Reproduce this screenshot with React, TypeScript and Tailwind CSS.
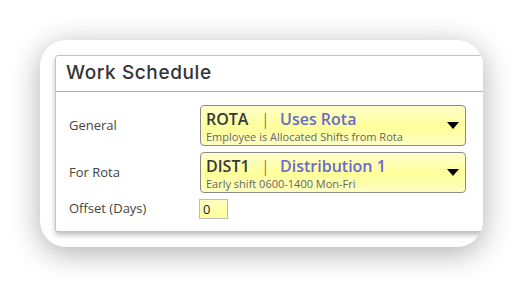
import React from 'react';

const Caret = () => (
    <svg width="12" height="7" viewBox="0 0 12 7" className="shrink-0">
        <path d="M0 0 H12 L6 7 Z" fill="#000" />
    </svg>
);

const RotaSelect = ({ code, name, note }: { code: string; name: string; note: string }) => (
    <div className="w-[266px] h-[41px] rounded-[4px] border border-[#8a8a8a] bg-[linear-gradient(to_bottom,#ffffcc,#ffff99_55%,#ffffc4)] flex items-center pl-[5px] pr-[6px]">
        <div className="flex-1 min-w-0 leading-none">
            <div className="flex items-center text-[16px] font-semibold h-[20px]">
                <span className="text-[#383838] w-[55px]">{code}</span>
                <span className="text-[#b07840] font-normal w-[19px]">|</span>
                <span className="text-[#6a6acc]">{name}</span>
            </div>
            <div className="text-[11px] text-[#666] mt-[2px] whitespace-nowrap">{note}</div>
        </div>
        <Caret />
    </div>
);

export default function App() {
    const rows = [
        { label: 'General', code: 'ROTA', name: 'Uses Rota', note: 'Employee is Allocated Shifts from Rota' },
        { label: 'For Rota', code: 'DIST1', name: 'Distribution 1', note: 'Early shift 0600-1400 Mon-Fri' },
    ];

    return (
        <div className="w-[523px] h-[288px] bg-white pt-[40px] pl-[40px] font-['Open_Sans',sans-serif]">
            <div className="w-[443px] h-[207px] rounded-[26px] bg-white overflow-hidden shadow-[0_6px_30px_rgba(0,0,0,0.32)] pt-[15px] pl-[15px]">
                <div className="w-[460px] border border-[#c4c4c4] rounded-[3px] bg-white shadow-[0_3px_5px_rgba(0,0,0,0.25)]">
                    <div className="h-[36px] border-b border-[#b4b4b4] flex items-center pl-[10px]">
                        <h3 className="text-[19px] font-medium text-[#333] font-['Inter',sans-serif] tracking-[0.6px]">Work Schedule</h3>
                    </div>
                    <div className="pt-[13px] pb-[12px] pl-[13px] flex flex-col gap-[6px]">
                        {rows.map(row => (
                            <div key={row.code} className="flex items-center">
                                <div className="w-[131px] text-[13px] text-[#444]">{row.label}</div>
                                <RotaSelect code={row.code} name={row.name} note={row.note} />
                            </div>
                        ))}
                        <div className="flex items-center">
                            <div className="w-[130px] text-[13px] text-[#444]">Offset (Days)</div>
                            <div className="w-[29px] h-[20px] border border-[#bdbdbd] bg-[linear-gradient(to_bottom,#ffffc4,#ffff99)] text-[13px] text-[#1a1a40] pl-[3px] leading-[18px]">0</div>
                        </div>
                    </div>
                </div>
            </div>
        </div>
    );
}
